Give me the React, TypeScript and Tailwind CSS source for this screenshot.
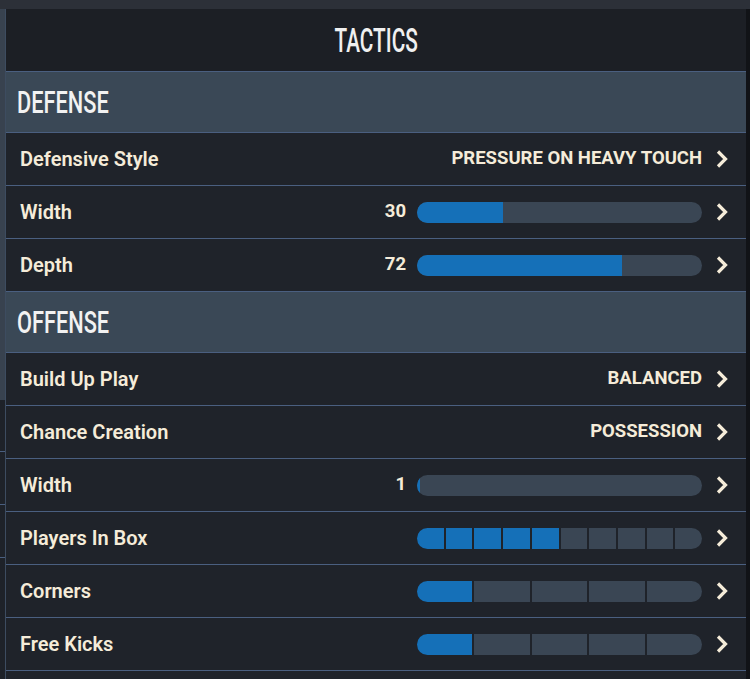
import React from 'react'

// ----------------------------------------------------------------------
// Data
// ----------------------------------------------------------------------

type Row =
  | { kind: 'text'; label: string; value: string }
  | { kind: 'slider'; label: string; value: number }
  | { kind: 'steps'; label: string; steps: number; filled: number }

interface Section {
  title: string
  rows: Row[]
}

const sections: Section[] = [
  {
    title: 'DEFENSE',
    rows: [
      { kind: 'text', label: 'Defensive Style', value: 'PRESSURE ON HEAVY TOUCH' },
      { kind: 'slider', label: 'Width', value: 30 },
      { kind: 'slider', label: 'Depth', value: 72 },
    ],
  },
  {
    title: 'OFFENSE',
    rows: [
      { kind: 'text', label: 'Build Up Play', value: 'BALANCED' },
      { kind: 'text', label: 'Chance Creation', value: 'POSSESSION' },
      { kind: 'slider', label: 'Width', value: 1 },
      { kind: 'steps', label: 'Players In Box', steps: 10, filled: 5 },
      { kind: 'steps', label: 'Corners', steps: 5, filled: 1 },
      { kind: 'steps', label: 'Free Kicks', steps: 5, filled: 1 },
    ],
  },
]

const condensed = { fontFamily: 'Roboto, "DejaVu Sans", sans-serif' }
const body = { fontFamily: 'Roboto, "Liberation Sans", sans-serif' }

// ----------------------------------------------------------------------
// Sub-Components
// ----------------------------------------------------------------------

function Chevron() {
  return (
    <svg width="14" height="20" viewBox="0 0 14 20" className="shrink-0">
      <polyline
        points="3,2.5 10.5,10 3,17.5"
        fill="none"
        stroke="#f5ecd9"
        strokeWidth="3.2"
        strokeLinejoin="miter"
      />
    </svg>
  )
}

function SliderBar({ value }: { value: number }) {
  return (
    <div className="h-[21px] w-[285px] rounded-full bg-[#3a4654] overflow-hidden">
      <div className="h-full bg-[#1570b8]" style={{ width: `${value}%` }} />
    </div>
  )
}

function StepBar({ steps, filled }: { steps: number; filled: number }) {
  return (
    <div className="flex h-[21px] w-[285px] gap-[2px] rounded-full overflow-hidden">
      {Array.from({ length: steps }).map((_, i) => (
        <div
          key={i}
          className={i < filled ? 'flex-1 bg-[#1570b8]' : 'flex-1 bg-[#3a4654]'}
        />
      ))}
    </div>
  )
}

function TacticRow({ row }: { row: Row }) {
  return (
    <div className="flex h-[53px] items-center border-b border-[#4a5f80] pl-[14px] pr-[17px]" style={body}>
      <span className="text-[20px] font-semibold text-[#f5ecd9]">{row.label}</span>
      <div className="ml-auto flex items-center">
        {row.kind === 'text' && (
          <span className="text-[18.5px] font-bold text-[#f5ecd9]">{row.value}</span>
        )}
        {row.kind === 'slider' && (
          <>
            <span className="mr-[11px] text-[18.5px] font-bold text-[#f5ecd9]">{row.value}</span>
            <SliderBar value={row.value} />
          </>
        )}
        {row.kind === 'steps' && <StepBar steps={row.steps} filled={row.filled} />}
        <div className="ml-[13px]">
          <Chevron />
        </div>
      </div>
    </div>
  )
}

function SectionHeader({ title }: { title: string }) {
  return (
    <div className="flex h-[61px] items-center border-b border-[#4a5f80] bg-[#3a4856] pl-[11px]">
      <span
        className="inline-block origin-left scale-x-[0.68] text-[32px] font-medium leading-none text-[#f2f2f2]"
        style={condensed}
      >
        {title}
      </span>
    </div>
  )
}

// ----------------------------------------------------------------------
// Main Component
// ----------------------------------------------------------------------

export default function App() {
  return (
    <div className="flex h-[679px] w-[750px] flex-col overflow-hidden bg-[#2c3038]">
      {/* top strip */}
      <div className="h-[9px] shrink-0 bg-[#2c3038]" />

      <div className="flex flex-1">
        {/* background panel peeking out on the left */}
        <div className="flex w-[5px] flex-col">
          <div className="h-[391px] bg-[#38424f]" />
          <div className="h-[52px] border-b border-[#4a5f80] bg-[#1e2229]" />
          <div className="h-[53px] border-b border-[#4a5f80] bg-[#1e2229]" />
          <div className="h-[53px] border-b border-[#4a5f80] bg-[#1e2229]" />
          <div className="flex-1 bg-[#1e2229]" />
        </div>

        {/* tactics panel */}
        <div className="flex flex-1 flex-col border-l border-[#3d4c60] border-r-[4px] border-r-[#111317] bg-[#1f232a]">
          <div className="flex h-[63px] shrink-0 items-center justify-center border-b border-[#4a5f80] bg-[#1c1f25]">
            <span
              className="inline-block scale-x-[0.63] text-[33px] font-medium leading-none text-[#f0f0f0]"
              style={condensed}
            >
              TACTICS
            </span>
          </div>

          {sections.map((section) => (
            <div key={section.title}>
              <SectionHeader title={section.title} />
              {section.rows.map((row, i) => (
                <TacticRow key={i} row={row} />
              ))}
            </div>
          ))}
        </div>
      </div>
    </div>
  )
}
